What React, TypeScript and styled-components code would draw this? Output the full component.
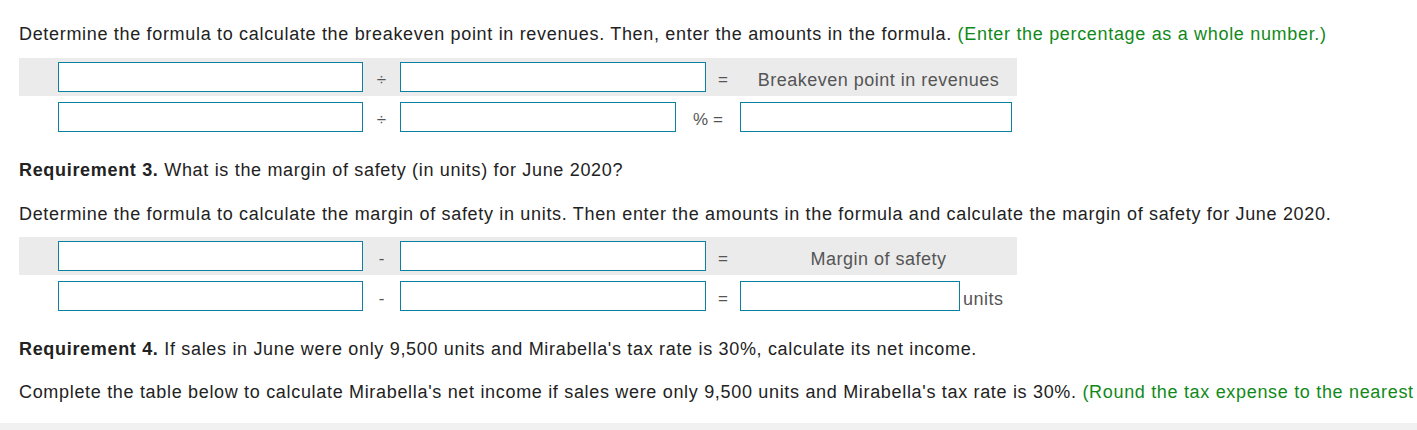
import styled, { createGlobalStyle } from "styled-components";

const GlobalStyle = createGlobalStyle`
	html, body {
		margin: 0;
		padding: 0;
		background: #ffffff;
		overflow: hidden;
	}
	body {
		font-family: "Liberation Sans", Arial, sans-serif;
		color: #222222;
	}
`;

const Page = styled.div`
	width: 1417px;
	height: 430px;
	display: flex;
	flex-direction: column;
	overflow: hidden;
`;

const Content = styled.div`
	flex: 1;
	padding: 23px 0 0 19px;
	overflow: hidden;
`;

const Para = styled.p<{ $top?: number }>`
	margin: ${(p) => p.$top ?? 0}px 0 0 0;
	font-size: 18px;
	line-height: 22px;
	letter-spacing: 0.68px;
	white-space: nowrap;
`;

const Hint = styled.span`
	color: #11891a;
`;

const Formula = styled.div<{ $top: number }>`
	margin-top: ${(p) => p.$top}px;
	width: 998px;
	display: flex;
	flex-direction: column;
`;

const FormulaRow = styled.div<{ $shaded?: boolean }>`
	display: flex;
	align-items: ${(p) => (p.$shaded ? "center" : "flex-start")};
	height: ${(p) => (p.$shaded ? 38 : 36)}px;
	padding-left: 39px;
	padding-top: ${(p) => (p.$shaded ? 0 : 6)}px;
	box-sizing: border-box;
	background: ${(p) => (p.$shaded ? "#ebebeb" : "transparent")};
`;

const Field = styled.input<{ $w: number }>`
	width: ${(p) => p.$w}px;
	height: 30px;
	flex: none;
	box-sizing: border-box;
	border: 1px solid #0d7fa1;
	border-radius: 0;
	background: #ffffff;
	padding: 2px 4px;
	margin: 0;
	font: inherit;
	font-size: 16px;
	outline: none;
`;

const Op = styled.span<{ $w: number }>`
	width: ${(p) => p.$w}px;
	flex: none;
	align-self: center;
	box-sizing: border-box;
	padding-top: 6px;
	text-align: center;
	color: #555555;
	font-size: 17px;
	line-height: 24px;
`;

const Label = styled.span<{ $w: number }>`
	width: ${(p) => p.$w}px;
	box-sizing: border-box;
	padding-top: 6px;
	text-align: center;
	color: #555555;
	font-size: 18px;
	line-height: 24px;
	letter-spacing: 0.5px;
`;

const Unit = styled.span`
	align-self: center;
	margin-left: 3px;
	padding-top: 6px;
	color: #555555;
	font-size: 18px;
	line-height: 24px;
	letter-spacing: 0.5px;
`;

const Scrollbar = styled.div`
	height: 7px;
	flex: none;
	background: #f1f1f1;
`;

export default function App() {
	return (
		<>
			<GlobalStyle />
			<Page>
				<Content>
					<Para>
						Determine the formula to calculate the breakeven point in revenues. Then, enter the amounts in the
						formula. <Hint>(Enter the percentage as a whole number.)</Hint>
					</Para>

					<Formula $top={13}>
						<FormulaRow $shaded>
							<Field $w={305} />
							<Op $w={37}>÷</Op>
							<Field $w={306} />
							<Op $w={34}>=</Op>
							<Label $w={277}>Breakeven point in revenues</Label>
						</FormulaRow>
						<FormulaRow>
							<Field $w={305} />
							<Op $w={37}>÷</Op>
							<Field $w={276} />
							<Op $w={64}>% =</Op>
							<Field $w={272} />
						</FormulaRow>
					</Formula>

					<Para $top={27}>
						<b>Requirement 3.</b> What is the margin of safety (in units) for June 2020?
					</Para>
					<Para $top={22}>
						Determine the formula to calculate the margin of safety in units. Then enter the amounts in the formula
						and calculate the margin of safety for June 2020.
					</Para>

					<Formula $top={12}>
						<FormulaRow $shaded>
							<Field $w={305} />
							<Op $w={37}>-</Op>
							<Field $w={306} />
							<Op $w={34}>=</Op>
							<Label $w={277}>Margin of safety</Label>
						</FormulaRow>
						<FormulaRow>
							<Field $w={305} />
							<Op $w={37}>-</Op>
							<Field $w={306} />
							<Op $w={34}>=</Op>
							<Field $w={220} />
							<Unit>units</Unit>
						</FormulaRow>
					</Formula>

					<Para $top={27}>
						<b>Requirement 4.</b> If sales in June were only 9,500 units and Mirabella's tax rate is 30%, calculate
						its net income.
					</Para>
					<Para $top={21}>
						Complete the table below to calculate Mirabella's net income if sales were only 9,500 units and
						Mirabella's tax rate is 30%. <Hint>(Round the tax expense to the nearest</Hint>
					</Para>
				</Content>
				<Scrollbar />
			</Page>
		</>
	);
}
